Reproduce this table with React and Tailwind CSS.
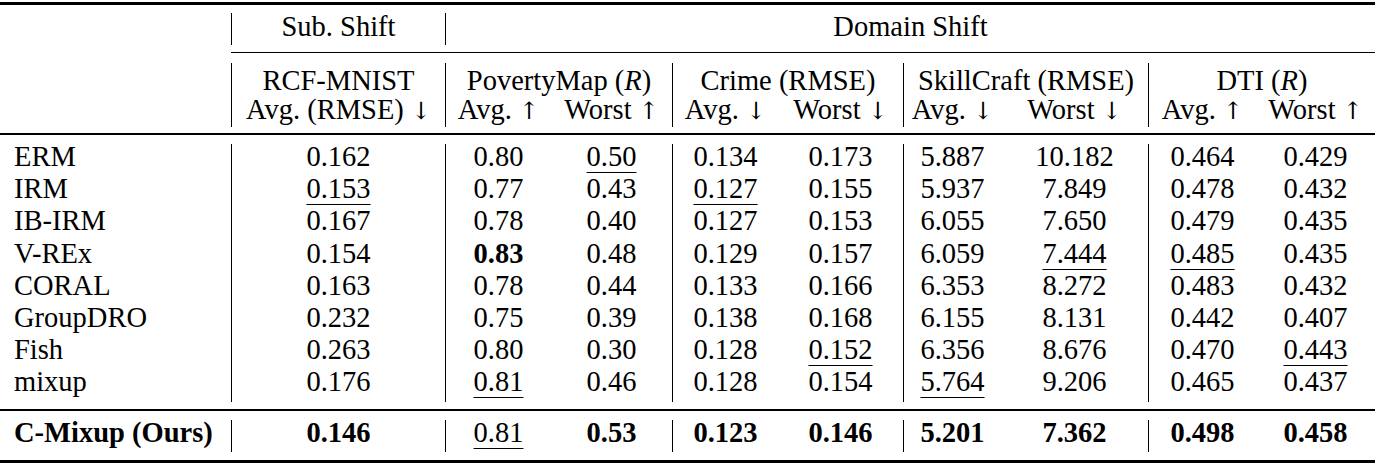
const cols = "grid grid-cols-[231px_214px_106px_121px_106px_125px_98px_147px_108px_119px]";

// columns that open a group and carry the vertical rule on their left
const ruled = [1, 2, 4, 6, 8];

const rows = [
  ["ERM", "0.162", "0.80", "_0.50", "0.134", "0.173", "5.887", "10.182", "0.464", "0.429"],
  ["IRM", "_0.153", "0.77", "0.43", "_0.127", "0.155", "5.937", "7.849", "0.478", "0.432"],
  ["IB-IRM", "0.167", "0.78", "0.40", "0.127", "0.153", "6.055", "7.650", "0.479", "0.435"],
  ["V-REx", "0.154", "*0.83", "0.48", "0.129", "0.157", "6.059", "_7.444", "_0.485", "0.435"],
  ["CORAL", "0.163", "0.78", "0.44", "0.133", "0.166", "6.353", "8.272", "0.483", "0.432"],
  ["GroupDRO", "0.232", "0.75", "0.39", "0.138", "0.168", "6.155", "8.131", "0.442", "0.407"],
  ["Fish", "0.263", "0.80", "0.30", "0.128", "_0.152", "6.356", "8.676", "0.470", "_0.443"],
  ["mixup", "0.176", "_0.81", "0.46", "0.128", "0.154", "_5.764", "9.206", "0.465", "0.437"],
];

const ours = ["*C-Mixup (Ours)", "*0.146", "_0.81", "*0.53", "*0.123", "*0.146", "*5.201", "*7.362", "*0.498", "*0.458"];

function Value({ v }) {
  if (v.startsWith("_")) {
    return <span className="underline decoration-1 underline-offset-[6px]">{v.slice(1)}</span>;
  }
  if (v.startsWith("*")) {
    return <span className="font-bold">{v.slice(1)}</span>;
  }
  return <span>{v}</span>;
}

function DataRow({ cells, h }) {
  return cells.map((v, i) => (
    <div
      key={i}
      className={`${h} leading-[26px] ${i === 0 ? "pl-[14px] text-left" : "text-center"} ${
        ruled.includes(i) ? "border-l border-black" : ""
      }`}
    >
      <Value v={v} />
    </div>
  ));
}

function Arrow({ up }) {
  return <span className="font-['DejaVu_Serif'] text-[24px]">{up ? "↑" : "↓"}</span>;
}

const R = <i>R</i>;

export default function App() {
  return (
    <div className="w-[1380px] h-[464px] bg-white text-black font-['Liberation_Serif',serif] text-[28.5px] leading-[31px] pt-[2px] overflow-hidden">
      <div className="w-[1375px]">
        <div className="border-t-[3px] border-black" />

        {/* header row 1 */}
        <div className={`${cols} mt-[8px] leading-[26px]`}>
          <div className="h-[32px]" />
          <div className="h-[32px] pt-[1px] text-center border-l border-black">Sub. Shift</div>
          <div className="col-span-8 h-[32px] pt-[1px] text-center border-l border-black">Domain Shift</div>
        </div>
        <div className="mt-[7px] ml-[231px] border-t border-black" />

        {/* header rows 2-3 */}
        <div className={`${cols} mt-[10px]`}>
          <div />
          <div className="h-[33px] pt-[2px] text-center border-l border-black">RCF-MNIST</div>
          <div className="col-span-2 h-[33px] pt-[2px] text-center border-l border-black">PovertyMap ({R})</div>
          <div className="col-span-2 h-[33px] pt-[2px] text-center border-l border-black">Crime (RMSE)</div>
          <div className="col-span-2 h-[33px] pt-[2px] text-center border-l border-black">SkillCraft (RMSE)</div>
          <div className="col-span-2 h-[33px] pt-[2px] text-center border-l border-black">DTI ({R})</div>

          <div />
          <div className="h-[31px] leading-[27px] text-center border-l border-black">Avg. (RMSE) <Arrow /></div>
          <div className="h-[31px] leading-[27px] text-center border-l border-black">Avg. <Arrow up /></div>
          <div className="h-[31px] leading-[27px] text-center">Worst <Arrow up /></div>
          <div className="h-[31px] leading-[27px] text-center border-l border-black">Avg. <Arrow /></div>
          <div className="h-[31px] leading-[27px] text-center">Worst <Arrow /></div>
          <div className="h-[31px] leading-[27px] text-center border-l border-black">Avg. <Arrow /></div>
          <div className="h-[31px] leading-[27px] text-center">Worst <Arrow /></div>
          <div className="h-[31px] leading-[27px] text-center border-l border-black">Avg. <Arrow up /></div>
          <div className="h-[31px] leading-[27px] text-center">Worst <Arrow up /></div>
        </div>
        <div className="mt-[6px] border-t-2 border-black" />

        {/* results */}
        <div className={`${cols} mt-[9px] pb-[1px]`}>
          {rows.map((r) => (
            <DataRow key={r[0]} cells={r} h="h-[32.2px]" />
          ))}
        </div>
        <div className="mt-[6px] border-t-2 border-black" />

        <div className={`${cols} mt-[9px]`}>
          <DataRow cells={ours} h="h-[32px]" />
        </div>
        <div className="mt-[8px] border-t-[3px] border-black" />
      </div>
    </div>
  );
}
